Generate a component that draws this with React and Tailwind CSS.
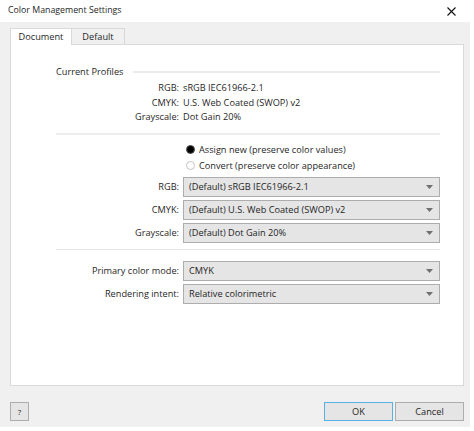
import React from "react";

const profiles = [
  ["RGB:", "sRGB IEC61966-2.1"],
  ["CMYK:", "U.S. Web Coated (SWOP) v2"],
  ["Grayscale:", "Dot Gain 20%"],
];

function Select({ value }) {
  return (
    <div className="h-[20px] flex items-center justify-between border border-[#adadad] bg-[#e5e5e5] pl-[5px] pr-[6px]">
      <span>{value}</span>
      <svg width="7" height="4" viewBox="0 0 7 4">
        <path d="M0 0h7L3.5 4z" fill="#707070" />
      </svg>
    </div>
  );
}

function Row({ label, children }) {
  return (
    <div className="flex items-center">
      <div className="w-[127px] text-right pr-[4px] shrink-0">{label}</div>
      <div className="flex-1">{children}</div>
    </div>
  );
}

export default function App() {
  return (
    <div
      className="w-[474px] h-[431px] bg-white text-[9.2px] text-[#1f1f1f] overflow-hidden"
      style={{ fontFamily: '"Open Sans", "Noto Sans", sans-serif' }}
    >
      <div className="w-[470px] h-[427px] flex flex-col bg-[#f0f0f0]">
        {/* title bar */}
        <div className="h-[22px] bg-white flex items-center justify-between pl-[8px] pr-[14px] shrink-0">
          <span className="text-[8.8px]">Color Management Settings</span>
          <svg width="9" height="9" viewBox="0 0 9 9">
            <path d="M0.5 0.5l8 8M8.5 0.5l-8 8" stroke="#111" strokeWidth="1.1" />
          </svg>
        </div>

        {/* tabs */}
        <div className="flex items-end pl-[10px] pt-[6px] h-[22px] shrink-0">
          <div className="h-[17px] w-[62px] bg-white border border-b-0 border-[#d9d9d9] flex items-center justify-center relative top-[1px]">
            Document
          </div>
          <div className="h-[16px] w-[53px] bg-[#f0f0f0] border border-l-0 border-b-0 border-[#d9d9d9] flex items-center justify-center">
            Default
          </div>
        </div>

        {/* panel */}
        <div className="ml-[10px] w-[454px] h-[342px] bg-white border border-[#d9d9d9] pl-[45px] pr-[23px] pt-[20px] shrink-0">
          <div className="flex items-center h-[14px]">
            <span>Current Profiles</span>
            <div className="flex-1 h-[2px] bg-[#ececec] ml-[10px]" />
          </div>
          <div className="mt-[2px] flex flex-col">
            {profiles.map(([l, v]) => (
              <div key={l} className="h-[14.5px] flex items-center">
                <div className="w-[127px] text-right pr-[4px]">{l}</div>
                <div>{v}</div>
              </div>
            ))}
          </div>
          <div className="h-[2px] bg-[#ececec] mt-[8px]" />

          <div className="mt-[7px] flex flex-col pl-[130px]">
            <div className="h-[16px] flex items-center gap-[4px]">
              <span className="w-[9px] h-[9px] rounded-full bg-black border border-[#555]" />
              <span>Assign new (preserve color values)</span>
            </div>
            <div className="h-[16px] flex items-center gap-[4px]">
              <span className="w-[9px] h-[9px] rounded-full border border-[#c4c4c4] bg-white" />
              <span>Convert (preserve color appearance)</span>
            </div>
          </div>

          <div className="mt-[3px] flex flex-col gap-[3px]">
            <Row label="RGB:">
              <Select value="(Default) sRGB IEC61966-2.1" />
            </Row>
            <Row label="CMYK:">
              <Select value="(Default) U.S. Web Coated (SWOP) v2" />
            </Row>
            <Row label="Grayscale:">
              <Select value="(Default) Dot Gain 20%" />
            </Row>
          </div>

          <div className="h-[1px] bg-[#e5e5e5] mt-[6px]" />

          <div className="mt-[11px] flex flex-col gap-[3px]">
            <Row label="Primary color mode:">
              <Select value="CMYK" />
            </Row>
            <Row label="Rendering intent:">
              <Select value="Relative colorimetric" />
            </Row>
          </div>
        </div>

        {/* buttons */}
        <div className="mt-[16px] flex items-center pl-[10px] pr-[6px]">
          <div className="w-[19px] h-[19px] border border-[#adadad] bg-[#e5e5e5] flex items-center justify-center text-[8px]">
            ?
          </div>
          <div className="flex-1" />
          <div className="w-[69px] h-[19px] border border-[#57b1e4] bg-[#e5e5e5] flex items-center justify-center">
            OK
          </div>
          <div className="w-[69px] h-[19px] ml-[2px] border border-[#adadad] bg-[#e5e5e5] flex items-center justify-center">
            Cancel
          </div>
        </div>
      </div>
    </div>
  );
}
